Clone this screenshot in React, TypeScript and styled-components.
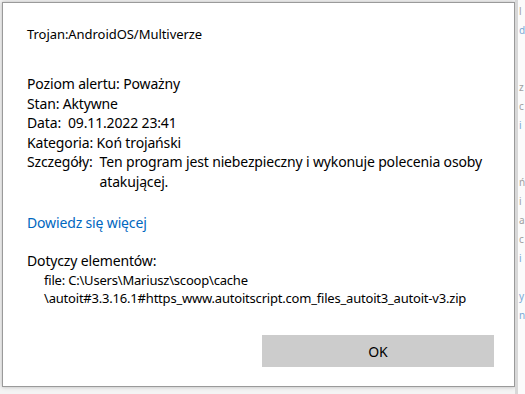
import React from "react";
import styled, { createGlobalStyle } from "styled-components";

const Global = createGlobalStyle`
  html, body { margin: 0; padding: 0; }
  body {
    width: 525px;
    height: 394px;
    overflow: hidden;
    background: #f4f4f4;
    font-family: "Segoe UI", "Noto Sans", "Open Sans", sans-serif;
    color: #000;
  }
`;

const Page = styled.div`
  display: flex;
  align-items: flex-start;
  width: 525px;
  height: 394px;
  padding: 2px 0 0 2px;
  box-sizing: border-box;
`;

const Dialog = styled.div`
  width: 513px;
  height: 385px;
  box-sizing: border-box;
  background: #fff;
  border: 1px solid #9a9a9a;
  box-shadow: 0 0 4px rgba(0, 0, 0, 0.25);
  padding: 22px 24px 0 24px;
  display: flex;
  flex-direction: column;
  flex-shrink: 0;
`;

const Title = styled.div`
  font-size: 13px;
  line-height: 18px;
  letter-spacing: -0.05px;
`;

const Details = styled.div`
  margin-top: 31px;
  display: flex;
  flex-direction: column;
`;

const Row = styled.div`
  display: flex;
  font-size: 14px;
  line-height: 19.5px;
  letter-spacing: -0.15px;
`;

const Label = styled.span`
  white-space: pre;
  flex-shrink: 0;
`;

const Value = styled.span`
  flex: 1;
`;

const Link = styled.a`
  margin-top: 22px;
  font-size: 14px;
  line-height: 19.5px;
  color: #0067c0;
  text-decoration: none;
  letter-spacing: -0.15px;
`;

const Section = styled.div`
  margin-top: 18px;
  font-size: 14px;
  line-height: 19.5px;
  letter-spacing: -0.15px;
`;

const FileList = styled.div`
  padding-left: 17px;
  padding-top: 1px;
  font-size: 13px;
  line-height: 18px;
  letter-spacing: -0.2px;
`;

const Footer = styled.div`
  margin-top: 28px;
  display: flex;
  justify-content: flex-end;
`;

const OkButton = styled.button`
  width: 232px;
  height: 32px;
  margin-right: -4px;
  border: none;
  background: #cccccc;
  font-family: inherit;
  font-size: 14px;
  color: #000;
`;

const Behind = styled.div`
  flex: 1;
  height: 394px;
  margin-top: -2px;
  display: flex;
  overflow: hidden;
  background: #fbfbfb;
`;

const BehindEdge = styled.div`
  width: 3px;
  background: #d8d8d8;
  flex-shrink: 0;
`;

const BehindText = styled.div`
  padding-top: 2px;
  padding-left: 1px;
  font-size: 10px;
  line-height: 19px;
  white-space: pre;
`;

const BehindLine = styled.div<{ $blue?: boolean }>`
  color: ${(p) => (p.$blue ? "#7aa8d6" : "#a0a0a0")};
`;

const behindLines: { t: string; blue?: boolean }[] = [
  { t: "l" },
  { t: "d", blue: true },
  { t: " " },
  { t: " " },
  { t: "z" },
  { t: "c" },
  { t: "i", blue: true },
  { t: " " },
  { t: " " },
  { t: "ń" },
  { t: "i" },
  { t: "a" },
  { t: "c" },
  { t: "i", blue: true },
  { t: " " },
  { t: "y", blue: true },
  { t: "n", blue: true },
  { t: " " },
  { t: " " },
  { t: " " },
];

export default function App() {
  return (
    <>
      <Global />
      <Page>
        <Dialog>
          <Title>Trojan:AndroidOS/Multiverze</Title>
          <Details>
            <Row>
              <Label>Poziom alertu: </Label>
              <Value>Poważny</Value>
            </Row>
            <Row>
              <Label>Stan: </Label>
              <Value>Aktywne</Value>
            </Row>
            <Row>
              <Label>Data:  </Label>
              <Value>09.11.2022 23:41</Value>
            </Row>
            <Row>
              <Label>Kategoria: </Label>
              <Value>Koń trojański</Value>
            </Row>
            <Row>
              <Label>Szczegóły:  </Label>
              <Value>
                Ten program jest niebezpieczny i wykonuje polecenia osoby
                atakującej.
              </Value>
            </Row>
          </Details>
          <Link href="#">Dowiedz się więcej</Link>
          <Section>
            Dotyczy elementów:
            <FileList>
              <div>file: C:\Users\Mariusz\scoop\cache</div>
              <div>\autoit#3.3.16.1#https_www.autoitscript.com_files_autoit3_autoit-v3.zip</div>
            </FileList>
          </Section>
          <Footer>
            <OkButton>OK</OkButton>
          </Footer>
        </Dialog>
        <Behind>
          <BehindEdge />
          <BehindText>
            {behindLines.map((l, i) => (
              <BehindLine key={i} $blue={l.blue}>
                {l.t}
              </BehindLine>
            ))}
          </BehindText>
        </Behind>
      </Page>
    </>
  );
}
